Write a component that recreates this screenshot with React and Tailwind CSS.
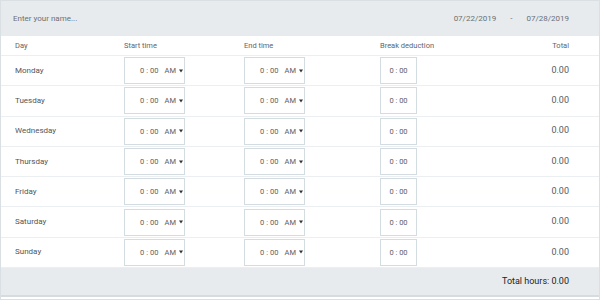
const days = ["Monday", "Tuesday", "Wednesday", "Thursday", "Friday", "Saturday", "Sunday"];

function TimeSelect() {
  return (
    <div className="flex h-[27px] w-[61px] items-center border border-[#d3dce0] bg-white pl-[15px] text-[7.5px] text-[#5a6066]">
      <span>0</span>
      <span className="mx-[2px]">:</span>
      <span>00</span>
      <span className="ml-[6px]">AM</span>
      <svg className="ml-[3px]" width="4" height="4" viewBox="0 0 4 4">
        <path d="M0 0.5 L4 0.5 L2 3.5 Z" fill="#333" />
      </svg>
    </div>
  );
}

function BreakInput() {
  return (
    <div className="flex h-[27px] w-[37px] items-center justify-center border border-[#d3dce0] bg-white text-[7.5px] text-[#5a6066]">
      0 : 00
    </div>
  );
}

export default function App() {
  return (
    <div className="h-[300px] w-[600px] border border-[#d9dfe3] bg-white font-['Roboto',sans-serif]">
      <div className="flex h-[35px] items-center bg-[#e7ebee] pl-[12px] pr-[30px] text-[8px] text-[#6b7075]">
        <span className="flex-1">Enter your name...</span>
        <span>07/22/2019</span>
        <span className="mx-[14px]">-</span>
        <span>07/28/2019</span>
      </div>
      <div className="grid h-[20px] grid-cols-[109px_120px_136px_1fr_auto] items-center border-b border-[#eceff1] pl-[14px] pr-[30px] text-[7.5px] text-[#5f656a]">
        <span>Day</span>
        <span>Start time</span>
        <span>End time</span>
        <span>Break deduction</span>
        <span className="text-right">Total</span>
      </div>
      {days.map((d) => (
        <div
          key={d}
          className="grid h-[30.3px] grid-cols-[109px_120px_136px_1fr_auto] items-center border-b border-[#eceff1] pl-[14px] pr-[30px]"
        >
          <span className="text-[8px] text-[#50565b]">{d}</span>
          <TimeSelect />
          <TimeSelect />
          <BreakInput />
          <span className="text-right text-[9px] text-[#555b60]">0.00</span>
        </div>
      ))}
      <div className="flex h-[29px] items-center justify-end border-b-2 border-[#d5dbdf] bg-[#e7ebee] pr-[30px] text-[9px] text-[#222]">
        Total hours: 0.00
      </div>
    </div>
  );
}
